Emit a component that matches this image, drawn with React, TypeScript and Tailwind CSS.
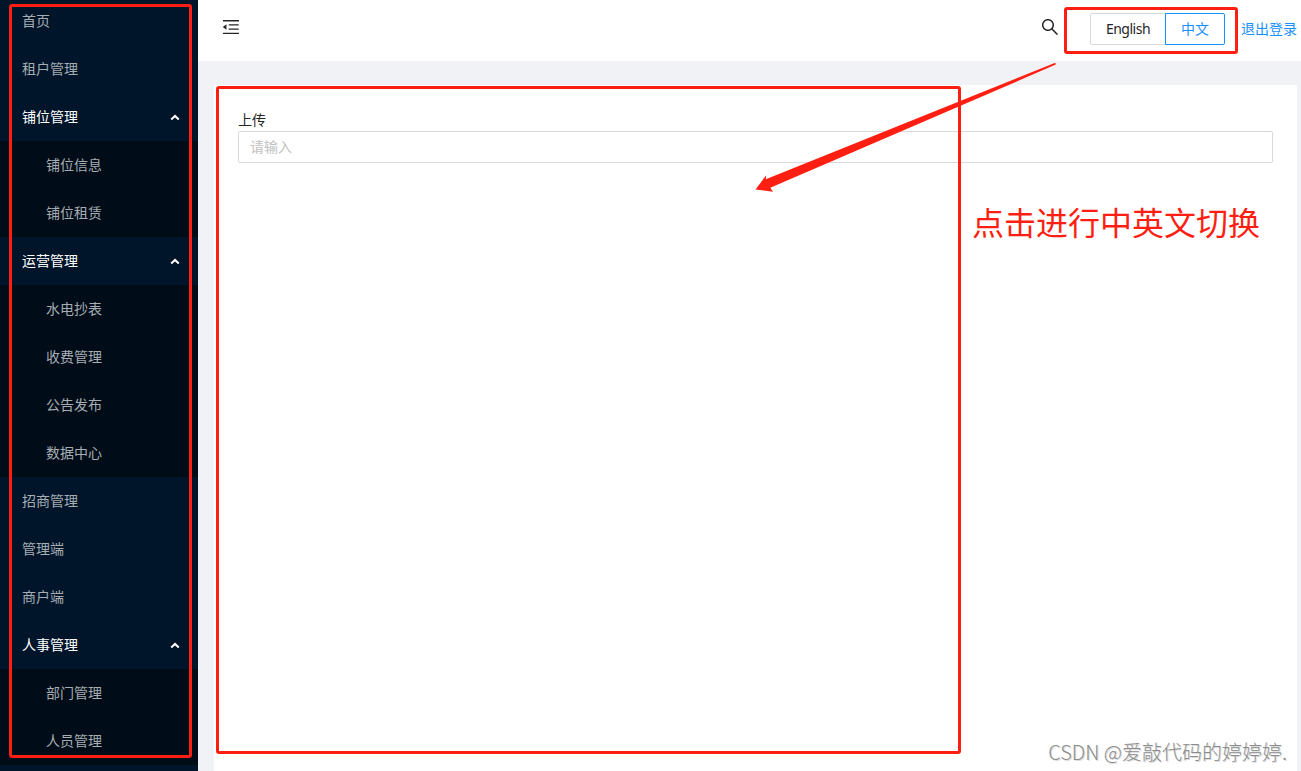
import React, { useState } from "react";
import { AiOutlineMenuFold, AiOutlineSearch } from "react-icons/ai";

type MenuItem = {
  title: string;
  children?: string[];
};

const menu: MenuItem[] = [
  { title: "首页" },
  { title: "租户管理" },
  { title: "铺位管理", children: ["铺位信息", "铺位租赁"] },
  { title: "运营管理", children: ["水电抄表", "收费管理", "公告发布", "数据中心"] },
  { title: "招商管理" },
  { title: "管理端" },
  { title: "商户端" },
  { title: "人事管理", children: ["部门管理", "人员管理"] },
];

const Arrow: React.FC = () => (
  <svg className="mt-[2px] h-[10px] w-[10px]" viewBox="0 0 10 10" fill="none">
    <path d="M1.2 7.5 5 3.9l3.8 3.6" stroke="#fff" strokeWidth={2} />
  </svg>
);

const SideBar: React.FC = () => {
  return (
    <aside className="h-full w-[198px] shrink-0 overflow-hidden bg-[#001529]">
      {/* the list is scrolled down by a few pixels */}
      <ul className="-mt-[3px]">
        {menu.map((item) => (
          <li key={item.title}>
            <div
              className={`flex h-12 items-center justify-between pr-[18px] pb-[2px] pl-[22px] ${
                item.children ? "text-white" : "text-[#a6adb4]"
              }`}
            >
              <span>{item.title}</span>
              {item.children && <Arrow />}
            </div>
            {item.children && (
              <ul className="bg-[#000c17] text-[#a6adb4]">
                {item.children.map((child) => (
                  <li key={child} className="flex h-12 items-center pb-[2px] pl-[46px]">
                    {child}
                  </li>
                ))}
              </ul>
            )}
          </li>
        ))}
      </ul>
    </aside>
  );
};

const Header: React.FC = () => {
  const [lang, setLang] = useState("zh");

  const active = "z-10 border-[#1890ff] text-[#1890ff]";
  const normal = "border-[#d9d9d9] text-[#262626]";

  return (
    <header className="flex h-[61px] shrink-0 items-start bg-white pr-1 pl-6">
      <AiOutlineMenuFold className="mt-[18px] h-[18px] w-[18px] text-[#262626]" viewBox="64 64 896 896" />
      <AiOutlineSearch className="mt-[18px] ml-auto h-[18px] w-[18px] text-[#262626]" viewBox="64 64 896 896" />
      <div className="mt-[13px] ml-[31px] flex">
        <button
          className={`relative h-8 w-[76px] rounded-l-[2px] border pb-[2px] tracking-[-0.5px] ${lang === "en" ? active : normal}`}
          onClick={() => setLang("en")}
        >
          English
        </button>
        <button
          className={`relative -ml-px h-8 w-[60px] rounded-r-[2px] border pb-[2px] ${lang === "zh" ? active : normal}`}
          onClick={() => setLang("zh")}
        >
          中文
        </button>
      </div>
      <a className="mt-[13px] ml-4 leading-8 text-[#1890ff]">退出登录</a>
    </header>
  );
};

// Red frames, arrow and note drawn over the page
const Notes: React.FC = () => {
  return (
    <div className="pointer-events-none absolute inset-0 z-20">
      <div className="absolute top-[4px] left-[9px] h-[754px] w-[183px] rounded-[3px] border-3 border-[#ff1f12]" />
      <div className="absolute top-[86px] left-[216px] h-[668px] w-[745px] rounded-[3px] border-3 border-[#ff1f12]" />
      <div className="absolute top-[7px] left-[1064px] h-[47px] w-[174px] rounded-[3px] border-3 border-[#ff1f12]" />
      <svg className="absolute top-[60px] left-[750px]" width="310" height="135" viewBox="750 60 310 135">
        <path
          d="M1055.3 62.8 L765.8 179.2 L766.2 175.3 L755.5 189.5 L773 191.7 L770.3 187.7 L1055.8 64.6 Z"
          fill="#ff1f12"
        />
      </svg>
      <p className="absolute top-[199px] left-[972px] text-[32px] leading-[48px] whitespace-nowrap text-[#ff1f12]">
        点击进行中英文切换
      </p>
      <p className="absolute top-[737px] right-[14px] font-['Noto_Sans_CJK_SC',sans-serif] text-[20px] leading-[30px] font-light whitespace-nowrap text-[#8c8c8c] [text-shadow:1px_1px_0_#dcdcdc]">
        CSDN @爱敲代码的婷婷婷.
      </p>
    </div>
  );
};

export default function App() {
  return (
    <div className="relative flex h-screen w-full overflow-hidden bg-[#f0f2f5] font-['Noto_Sans','Noto_Sans_CJK_SC',sans-serif] text-[14px]">
      <SideBar />
      <div className="flex min-w-0 flex-1 flex-col">
        <Header />
        <main className="mt-6 mr-1 ml-4 flex-1 bg-white p-6">
          <label className="block leading-[22px] text-[#262626]">上传</label>
          <input
            className="block h-8 w-full rounded-[2px] border border-[#d9d9d9] px-[11px] pb-[2px] outline-none placeholder:text-[#bfbfbf]"
            placeholder="请输入"
          />
        </main>
      </div>
      <Notes />
    </div>
  );
}
